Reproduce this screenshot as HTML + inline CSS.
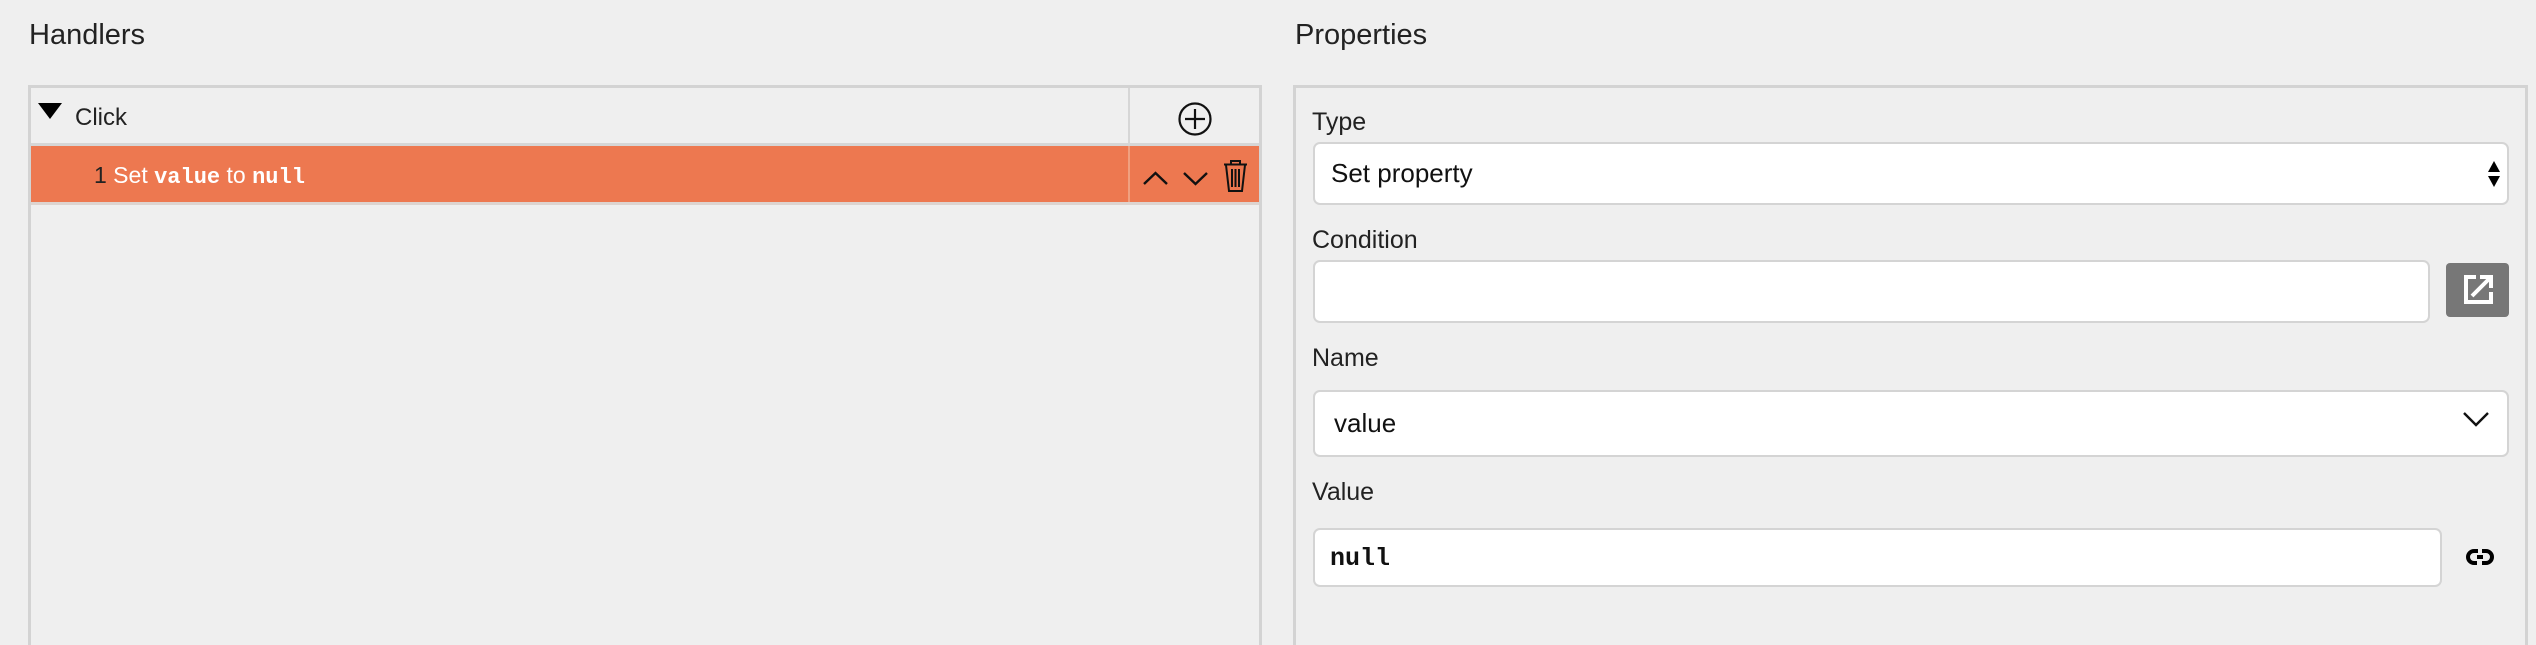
<!DOCTYPE html>
<html><head><meta charset="utf-8"><style>
*{box-sizing:border-box;margin:0;padding:0}
body{width:2536px;height:632px;background:#efefef;font-family:"Liberation Sans",sans-serif;color:#222;position:relative;overflow:hidden}
.abs{position:absolute}
.h{font-size:29px;top:19px}
.box{border:3px solid #d3d3d3}
.lbl{font-size:25px;left:1312px}
.inp{background:#fff;border:2px solid #d4d4d4;border-radius:7px;position:absolute}
.mono{font-family:"Liberation Mono",monospace;font-weight:bold}
</style></head><body>
<div class="abs h" style="left:29px">Handlers</div>
<div class="abs h" style="left:1295px">Properties</div>

<div class="abs box" style="left:28px;top:85px;width:1234px;height:560px;border-bottom:none"></div>
<div class="abs" style="left:31px;top:143px;width:1228px;height:3px;background:#d6d6d6"></div>
<div class="abs" style="left:1128px;top:88px;width:2px;height:116px;background:#d6d6d6"></div>
<div class="abs" style="left:31px;top:146px;width:1228px;height:56px;background:#ed7850"></div>
<div class="abs" style="left:1128px;top:146px;width:2px;height:56px;background:#f0a080"></div>
<div class="abs" style="left:31px;top:202px;width:1228px;height:3px;background:#ddd4d0"></div>
<svg class="abs" style="left:37px;top:102px" width="26" height="20"><polygon points="1,1 25,1 13,17" fill="#000"/></svg>
<div class="abs" style="left:75px;top:104px;font-size:24px">Click</div>
<svg class="abs" style="left:1176px;top:100px" width="38" height="38"><circle cx="19" cy="19" r="15.5" fill="none" stroke="#111" stroke-width="2.2"/><path d="M9 19H29M19 9V29" stroke="#111" stroke-width="2.2"/></svg>
<div class="abs" style="left:94px;top:162px;font-size:23px;color:#fff;white-space:pre"><span style="color:#222">1</span> Set <span class="mono" style="font-size:22px">value</span> to <span class="mono" style="font-size:22px">null</span></div>
<svg class="abs" style="left:1140px;top:165px" width="115" height="30">
<path d="M4 19L15.5 8L27 19" fill="none" stroke="#111" stroke-width="2.4"/>
<path d="M44 8L55.5 19L67 8" fill="none" stroke="#111" stroke-width="2.4"/>
</svg>
<svg class="abs" style="left:1222px;top:159px" width="28" height="34"><path d="M9 5V2H18V5M2 5.5H25M4 6L7 32H20L23 6M10 10V28M13.5 10V28M17 10V28" fill="none" stroke="#111" stroke-width="2"/></svg>

<div class="abs box" style="left:1293px;top:85px;width:1235px;height:560px;border-bottom:none"></div>
<div class="abs lbl" style="top:108px">Type</div>
<div class="inp" style="left:1313px;top:142px;width:1196px;height:63px"></div>
<div class="abs" style="left:1331px;top:158px;font-size:26px;color:#111">Set property</div>
<svg class="abs" style="left:2486px;top:160px" width="16" height="28"><polygon points="8,1 14,12 2,12" fill="#000"/><polygon points="8,27 14,16 2,16" fill="#000"/></svg>
<div class="abs lbl" style="top:226px">Condition</div>
<div class="inp" style="left:1313px;top:260px;width:1117px;height:63px"></div>
<div class="abs" style="left:2446px;top:263px;width:63px;height:54px;background:#777;border-radius:4px"></div>
<svg class="abs" style="left:2462px;top:273px" width="34" height="34"><path d="M14 4H4V29H29V19" fill="none" stroke="#fff" stroke-width="4"/><path d="M10 23L28 5M18 4H29V15" fill="none" stroke="#fff" stroke-width="4"/></svg>
<div class="abs lbl" style="top:344px">Name</div>
<div class="inp" style="left:1313px;top:390px;width:1196px;height:67px"></div>
<div class="abs" style="left:1334px;top:408px;font-size:26px;color:#111">value</div>
<svg class="abs" style="left:2462px;top:410px" width="28" height="18"><path d="M2 3L14 15L26 3" fill="none" stroke="#111" stroke-width="2.4"/></svg>
<div class="abs lbl" style="top:478px">Value</div>
<div class="inp" style="left:1313px;top:528px;width:1129px;height:59px"></div>
<div class="abs mono" style="left:1330px;top:544px;font-size:25px;color:#111">null</div>
<svg class="abs" style="left:2466px;top:547px" width="28" height="20"><path d="M12 4H8A6 6 0 0 0 8 16H11M16 4H20A6 6 0 0 1 20 16H16M11 10H17" fill="none" stroke="#000" stroke-width="4"/></svg>
</body></html>
